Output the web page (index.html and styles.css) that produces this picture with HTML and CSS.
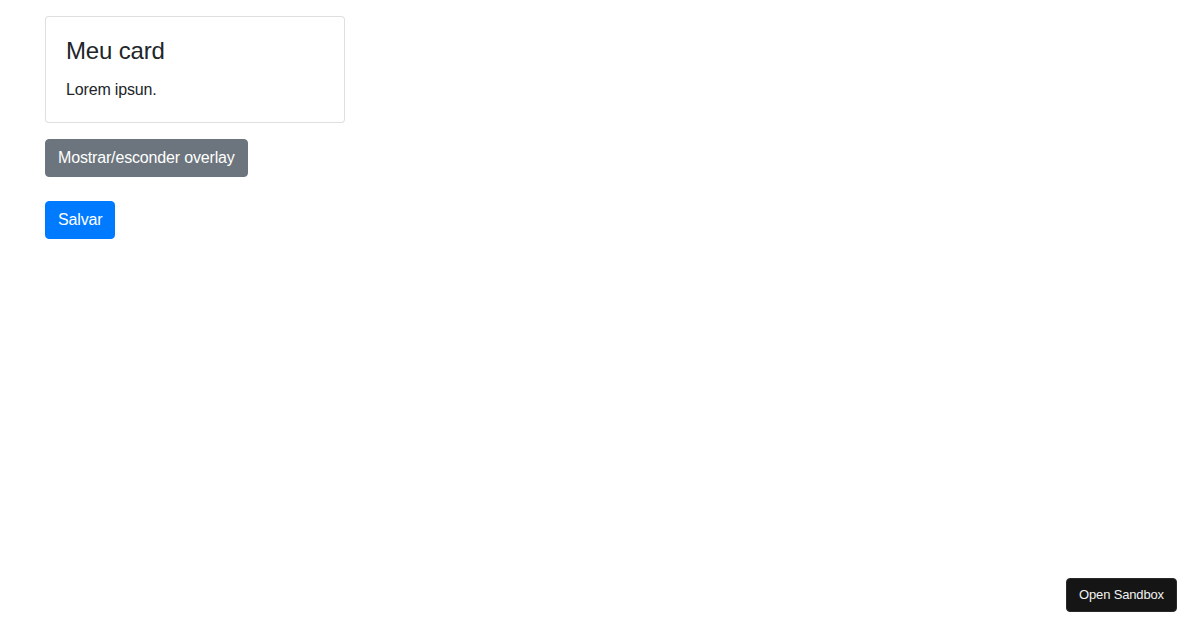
FILE: index.html
```html
<!DOCTYPE html>
<html lang="pt">
<head>
<meta charset="utf-8">
<title>Meu card</title>
<link rel="stylesheet" href="styles.css">
</head>
<body>
<main class="container">
  <div class="card">
    <div class="card-body">
      <h4 class="card-title">Meu card</h4>
      <p class="card-text">Lorem ipsun.</p>
    </div>
  </div>
  <div class="row-btn">
    <button class="btn btn-secondary" type="button">Mostrar/esconder overlay</button>
  </div>
  <div class="row-btn row-save">
    <button class="btn btn-primary" type="button">Salvar</button>
  </div>
</main>
<a class="open-sandbox" href="#">Open Sandbox</a>
</body>
</html>
```

FILE: styles.css
```css
html, body {
  margin: 0;
  padding: 0;
  background: #fff;
}
body {
  font-family: "Liberation Sans", Arial, sans-serif;
  font-size: 16px;
  line-height: 1.5;
  letter-spacing: -0.01em;
  color: #212529;
  width: 1200px;
  height: 630px;
  position: relative;
  overflow: hidden;
}
.container {
  padding: 16px 45px;
  display: flex;
  flex-direction: column;
  align-items: flex-start;
}
.card {
  width: 300px;
  box-sizing: border-box;
  border: 1px solid rgba(0, 0, 0, 0.125);
  border-radius: 4px;
  background: #fff;
}
.card-body {
  padding: 20px;
}
.card-title {
  margin: 0 0 12px;
  font-size: 24px;
  font-weight: 500;
  line-height: 1.2;
}
.card-text {
  margin: 0;
}
.row-btn {
  margin-top: 16px;
}
.row-save {
  margin-top: 24px;
}
.btn {
  display: inline-block;
  font-family: inherit;
  font-size: 16px;
  line-height: 1.5;
  letter-spacing: -0.01em;
  padding: 6px 12px;
  border: 1px solid transparent;
  border-radius: 4px;
  color: #fff;
  cursor: pointer;
}
.btn-secondary {
  background: #6c757d;
  border-color: #6c757d;
}
.btn-primary {
  background: #007bff;
  border-color: #007bff;
}
.open-sandbox {
  position: absolute;
  right: 23px;
  bottom: 18px;
  width: 111px;
  height: 34px;
  box-sizing: border-box;
  display: flex;
  align-items: center;
  justify-content: center;
  background: #151515;
  border: 1px solid #2a2a2a;
  border-radius: 4px;
  color: #f2f2f2;
  font-size: 13px;
  text-decoration: none;
}
```
